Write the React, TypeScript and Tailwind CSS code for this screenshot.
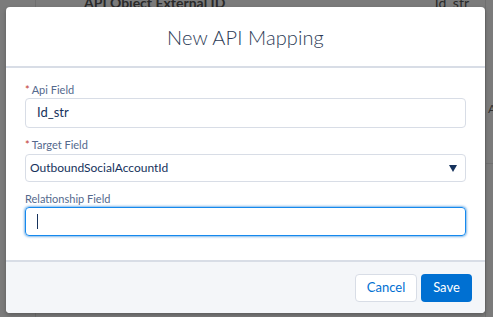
export default function App() {
  return (
    <div className="relative w-[493px] h-[317px] overflow-hidden bg-[#7b7b7b] font-['Lato',sans-serif]">
      {/* page behind the backdrop */}
      <div className="flex h-[317px]">
        <div className="w-[36px] border-r border-[#6f6f6f]" />
        <div className="flex-1 flex flex-col">
          <div className="flex h-[20px] items-start text-[14px] leading-[10px] text-[#2a2a2a]">
            <span className="ml-[48px] font-bold -mt-[2px]">API Object External ID</span>
            <span className="ml-auto mr-[16px] -mt-[2px]">Id_str</span>
          </div>
        </div>
        <div className="w-[8px] border-l border-[#6f6f6f] flex flex-col">
          <span className="mt-[100px] text-[12px] text-[#333] pl-[2px]">A</span>
          <div className="mt-[45px] border-t border-[#6f6f6f]" />
        </div>
      </div>

      {/* modal */}
      <div className="absolute left-[6px] top-[7px] w-[479px] h-[306px] flex flex-col rounded-[4px] bg-white shadow-[0_2px_4px_rgba(0,0,0,0.25)] overflow-hidden">
        <div className="h-[61px] flex items-center justify-center border-b-2 border-[#d8dde6]">
          <h2 className="text-[20px] font-light text-[#2b3a55] tracking-[0.1px]">New API Mapping</h2>
        </div>

        <div className="flex-1 px-[19px] pt-[13px]">
          <div className="h-[17px] text-[11px] leading-[17px] text-[#54698d]">
            <span className="text-[#c23934] mr-[2px]">*</span>Api Field
          </div>
          <div className="h-[30px] flex items-center px-[11px] rounded-[4px] border border-[#d8dde6] text-[13px] text-[#16325c]">
            Id_str
          </div>

          <div className="mt-[8px] h-[17px] mb-[1px] text-[11px] leading-[17px] text-[#54698d]">
            <span className="text-[#c23934] mr-[2px]">*</span>Target Field
          </div>
          <div className="h-[28px] flex items-center justify-between pl-[4px] pr-[8px] rounded-[4px] border border-[#d8dde6] text-[12px] text-[#16325c]">
            <span>OutboundSocialAccountId</span>
            <svg width="8" height="7" viewBox="0 0 8 7">
              <path d="M0 0h8L4 7z" fill="#16325c" />
            </svg>
          </div>

          <div className="mt-[8px] h-[17px] text-[11px] leading-[17px] text-[#54698d]">Relationship Field</div>
          <div className="h-[29px] flex items-center px-[11px] rounded-[4px] border border-[#1589ee] shadow-[0_0_3px_#0070d2]">
            <span className="w-px h-[15px] bg-[#16325c]" />
          </div>
        </div>

        <div className="h-[53px] flex items-center justify-end gap-[4px] pr-[13px] border-t-2 border-[#d8dde6] bg-[#f4f6f9]">
          <button className="h-[28px] w-[62px] rounded-[4px] border border-[#d8dde6] bg-white text-[13px] text-[#0070d2]">
            Cancel
          </button>
          <button className="h-[28px] w-[51px] rounded-[4px] bg-[#0070d2] text-[13px] text-white">
            Save
          </button>
        </div>
      </div>
    </div>
  )
}
